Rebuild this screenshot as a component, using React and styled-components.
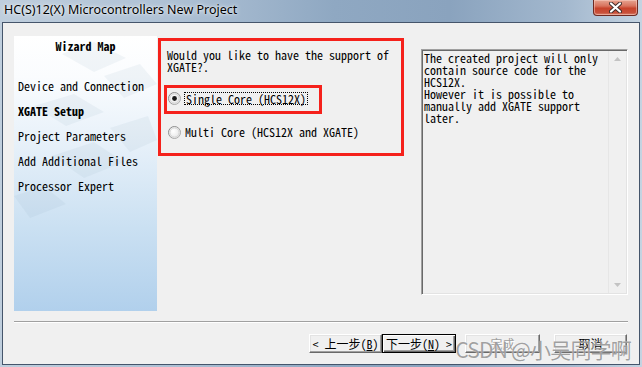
import React from "react";
import styled, { createGlobalStyle } from "styled-components";

const MONO = `"Noto Sans Mono CJK SC", "Liberation Mono", monospace`;

const Global = createGlobalStyle`
  html, body { margin: 0; padding: 0; }
  body { width: 642px; height: 367px; overflow: hidden; background: #a9bed4; }
`;

const Window = styled.div`
  position: relative;
  width: 642px;
  height: 367px;
  box-sizing: border-box;
  display: flex;
  flex-direction: column;
  background: linear-gradient(90deg, #bfcedd 0%, #adc0d4 28%, #8fa8c2 52%, #8aa3be 70%, #a3b8ce 88%, #c4d3e1 100%);
`;

const TitleBar = styled.div`
  height: 22px;
  flex: none;
  display: flex;
  align-items: flex-start;
  padding-left: 4px;
`;

const Title = styled.div`
  font-family: "Noto Sans", sans-serif;
  font-size: 12.5px;
  line-height: 20px;
  color: #000;
  text-shadow: 0 0 5px rgba(255, 255, 255, 0.9), 0 0 2px rgba(255, 255, 255, 0.8);
  white-space: nowrap;
`;

const Close = styled.div`
  margin-left: auto;
  margin-right: 4px;
  width: 45px;
  height: 16px;
  box-sizing: border-box;
  border: 1px solid #6e2a22;
  border-top: none;
  border-radius: 0 0 4px 4px;
  background: linear-gradient(180deg, #e6a491 0%, #d8735e 40%, #c7432b 55%, #c8503a 85%, #dc8a74 100%);
  box-shadow: inset 0 0 0 1px rgba(255, 220, 210, 0.45);
  display: flex;
  align-items: center;
  justify-content: center;
`;

const Client = styled.div`
  flex: 1;
  margin: 0 2px 2px 2px;
  border: 1px solid #45556b;
  background: #f0f0f0;
  padding: 13px 11px 0 11px;
  display: flex;
  flex-direction: column;
  font-family: ${MONO};
  font-size: 12px;
  line-height: 12px;
  color: #000;
`;

const MainRow = styled.div`
  display: flex;
  align-items: flex-start;
  height: 275px;
`;

const LeftPanel = styled.div`
  position: relative;
  width: 143px;
  height: 275px;
  box-sizing: border-box;
  padding-top: 4px;
  background: linear-gradient(180deg, #ffffff 0%, #fafcfe 15%, #e6f0f9 40%, #cae0f2 70%, #b1d0ec 100%);
  overflow: hidden;
`;

const Decor = styled.svg`
  position: absolute;
  left: 0;
  top: 0;
`;

const MapTitle = styled.div`
  position: relative;
  font-weight: bold;
  text-align: center;
  margin-bottom: 28px;
`;

const MapItem = styled.div`
  position: relative;
  padding-left: 4px;
  margin-bottom: 13px;
  font-weight: ${(p) => (p.$active ? "bold" : "normal")};
  white-space: nowrap;
`;

const Middle = styled.div`
  margin-left: 1px;
  margin-top: 2px;
  width: 246px;
  height: 118px;
  box-sizing: border-box;
  border: 3px solid #f5211b;
  padding: 8px 0 0 3px;
`;

const Question = styled.div`
  padding-left: 3px;
  white-space: nowrap;
`;

const SingleBox = styled.div`
  margin-top: 12px;
  width: 158px;
  height: 29px;
  box-sizing: border-box;
  border: 3px solid #f5211b;
  padding: 4px 0 0 1px;
  display: flex;
  align-items: flex-start;
`;

const RadioRow = styled.div`
  display: flex;
  align-items: flex-start;
  margin-top: ${(p) => p.$mt || 0}px;
  padding-left: ${(p) => p.$pl || 0}px;
`;

const RadioLabel = styled.span`
  margin-left: ${(p) => (p.$focus ? 3 : 4)}px;
  white-space: nowrap;
  line-height: 10px;
  padding: ${(p) => (p.$focus ? "1px 1px 0 1px" : "1px 0 0 0")};
  border: ${(p) => (p.$focus ? "1px dotted #000" : "none")};
`;

const TextBox = styled.div`
  margin-left: 17px;
  margin-top: 13px;
  width: 207px;
  height: 246px;
  box-sizing: border-box;
  border: 1px solid;
  border-color: #a0a0a0 #ffffff #ffffff #a0a0a0;
  box-shadow: inset 1px 1px 0 #696969, inset -1px -1px 0 #e3e3e3;
  background: #f0f0f0;
  display: flex;
`;

const TextContent = styled.div`
  flex: 1;
  padding: 2px 0 0 2px;
  white-space: nowrap;
`;

const Scrollbar = styled.div`
  width: 17px;
  flex: none;
  margin: 1px 1px 1px 0;
  border-left: 1px solid #e6e6e6;
  display: flex;
  flex-direction: column;
  align-items: center;
  justify-content: space-between;
  padding: 6px 0 6px 0;
`;

const Separator = styled.div`
  margin-top: 10px;
  border-top: 1px solid #a0a0a0;
  border-bottom: 1px solid #ffffff;
`;

const ButtonRow = styled.div`
  margin-top: 11px;
  display: flex;
  justify-content: flex-end;
  padding-right: 1px;
`;

const Button = styled.div`
  width: ${(p) => p.$w || 73}px;
  height: 19px;
  box-sizing: border-box;
  margin-left: ${(p) => p.$ml || 0}px;
  background: #f0f0f0;
  display: flex;
  align-items: center;
  justify-content: center;
  white-space: nowrap;
  color: ${(p) => (p.$disabled ? "#a0a0a0" : "#000")};
  text-shadow: ${(p) => (p.$disabled ? "1px 1px 0 #fff" : "none")};
  border: 1px solid;
  border-color: ${(p) => (p.$default ? "#000" : "#ffffff #696969 #696969 #ffffff")};
  box-shadow: ${(p) =>
    p.$default
      ? "inset 1px 1px 0 #fff, inset -1px -1px 0 #696969, inset -2px -2px 0 #a0a0a0"
      : "inset -1px -1px 0 #a0a0a0, inset 1px 1px 0 #e3e3e3"};
`;

const Watermark = styled.div`
  position: absolute;
  right: 11px;
  bottom: 6px;
  font-family: "Noto Sans CJK SC", "Noto Sans", sans-serif;
  font-size: 21px;
  line-height: 24px;
  letter-spacing: -0.8px;
  color: rgba(125, 125, 125, 0.72);
  text-shadow: 0 0 1px rgba(255, 255, 255, 0.9);
  white-space: nowrap;
  pointer-events: none;
`;

const RadioIcon = ({ checked }) => (
  <svg width="13" height="13" viewBox="0 0 13 13">
    <defs>
      <linearGradient id="rbord" x1="0" y1="0" x2="1" y2="1">
        <stop offset="0" stopColor="#7d7d7d" />
        <stop offset="1" stopColor="#b9b9b9" />
      </linearGradient>
      <radialGradient id="rfill" cx="0.4" cy="0.4" r="0.7">
        <stop offset="0" stopColor="#ffffff" />
        <stop offset="1" stopColor="#e2e2e2" />
      </radialGradient>
    </defs>
    <circle cx="6.5" cy="6.5" r="6" fill="url(#rfill)" stroke="url(#rbord)" strokeWidth="1" />
    <circle cx="6.5" cy="6.5" r="4.6" fill="none" stroke="#d4d4d4" strokeWidth="1" />
    {checked && <circle cx="6.5" cy="6.5" r="2.4" fill="#1b1b1b" />}
  </svg>
);

const Arrow = ({ up }) => (
  <svg width="7" height="4" viewBox="0 0 7 4">
    <polygon points={up ? "3.5,0 7,4 0,4" : "0,0 7,0 3.5,4"} fill="#c3c3c3" />
  </svg>
);

const CloseGlyph = () => (
  <svg width="13" height="11" viewBox="0 0 13 11">
    <path d="M2 1.5 L11 9.5 M11 1.5 L2 9.5" stroke="#3b2a28" strokeWidth="4" strokeLinecap="round" />
    <path d="M2 1.5 L11 9.5 M11 1.5 L2 9.5" stroke="#ffffff" strokeWidth="2.2" strokeLinecap="round" />
  </svg>
);

const diamonds = [
  "48,18 80,6 112,22 80,36",
  "90,40 126,28 143,48 110,62",
  "20,70 60,58 90,76 52,90",
  "96,92 134,80 143,104 116,116",
  "38,120 80,106 110,126 70,142",
  "0,160 30,150 52,168 16,182",
];

export default function App() {
  return (
    <>
      <Global />
      <Window>
        <TitleBar>
          <Title>HC(S)12(X) Microcontrollers New Project</Title>
          <Close>
            <CloseGlyph />
          </Close>
        </TitleBar>
        <Client>
          <MainRow>
            <LeftPanel>
              <Decor width="143" height="275" viewBox="0 0 143 275">
                {diamonds.map((d, i) => (
                  <polygon key={i} points={d} fill="#8ea3ba" opacity="0.1" />
                ))}
              </Decor>
              <MapTitle>Wizard Map</MapTitle>
              <MapItem>Device and Connection</MapItem>
              <MapItem $active>XGATE Setup</MapItem>
              <MapItem>Project Parameters</MapItem>
              <MapItem>Add Additional Files</MapItem>
              <MapItem>Processor Expert</MapItem>
            </LeftPanel>
            <Middle>
              <Question>
                Would you like to have the support of
                <br />
                XGATE?.
              </Question>
              <SingleBox>
                <RadioRow>
                  <RadioIcon checked />
                  <RadioLabel $focus>Single Core (HCS12X)</RadioLabel>
                </RadioRow>
              </SingleBox>
              <RadioRow $mt={12} $pl={4}>
                <RadioIcon />
                <RadioLabel>Multi Core (HCS12X and XGATE)</RadioLabel>
              </RadioRow>
            </Middle>
            <TextBox>
              <TextContent>
                The created project will only
                <br />
                contain source code for the
                <br />
                HCS12X.
                <br />
                However it is possible to
                <br />
                manually add XGATE support
                <br />
                later.
              </TextContent>
              <Scrollbar>
                <Arrow up />
                <Arrow />
              </Scrollbar>
            </TextBox>
          </MainRow>
          <Separator />
          <ButtonRow>
            <Button>
              &lt; 上一步(<u>B</u>)
            </Button>
            <Button $default $w={74}>
              下一步(<u>N</u>) &gt;
            </Button>
            <Button $disabled $w={75} $ml={9}>
              完成
            </Button>
            <Button $ml={14}>取消</Button>
          </ButtonRow>
        </Client>
        <Watermark>CSDN @小吴同学啊</Watermark>
      </Window>
    </>
  );
}
